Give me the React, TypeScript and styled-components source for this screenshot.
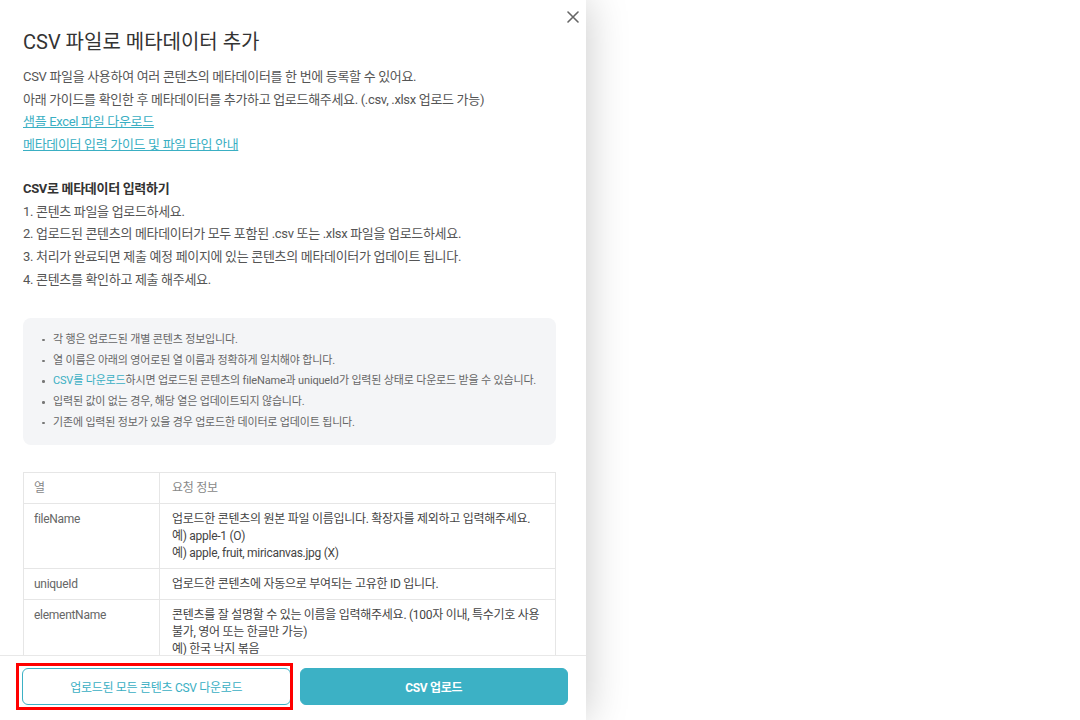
import styled, { createGlobalStyle } from 'styled-components';

const GlobalStyle = createGlobalStyle`
  html, body {
    margin: 0;
    padding: 0;
    background: #ffffff;
  }
  body {
    font-family: Roboto, "Noto Sans CJK KR", sans-serif;
    color: #555;
  }
  * {
    box-sizing: border-box;
  }
`;

const Panel = styled.div`
  position: relative;
  width: 586px;
  height: 720px;
  display: flex;
  flex-direction: column;
  background: #fff;
  box-shadow: 0 0 40px rgba(0, 0, 0, 0.22);
`;

const CloseButton = styled.button`
  position: absolute;
  top: 5px;
  right: 1px;
  width: 24px;
  height: 24px;
  padding: 0;
  border: none;
  background: none;
  display: flex;
  align-items: center;
  justify-content: center;
  cursor: pointer;
`;

const Body = styled.div`
  flex: 1;
  overflow: hidden;
  padding: 28px 30px 0 23px;
`;

const Title = styled.h2`
  margin: 0;
  font-size: 20px;
  line-height: 28px;
  font-weight: 400;
  color: #333;
`;

const Paragraph = styled.div<{ $gap: number }>`
  margin-top: ${(p) => p.$gap}px;
  font-size: 13px;
  line-height: 22.7px;
  letter-spacing: -0.32px;
  color: #555;
`;

const Line = styled.div``;

const Link = styled.a`
  color: #3aafc3;
  text-decoration: underline;
  cursor: pointer;
`;

const SubHeading = styled.div`
  font-weight: 700;
  color: #333;
`;

const NoteBox = styled.ul`
  margin: 27px 0 0;
  padding: 11.5px 16px 11.5px 18px;
  list-style: none;
  background: #f4f5f7;
  border-radius: 8px;
  font-size: 11px;
  line-height: 20.75px;
  letter-spacing: -0.17px;
  color: #666;
`;

const NoteItem = styled.li`
  position: relative;
  padding-left: 12px;
  &::before {
    content: '';
    position: absolute;
    left: 1px;
    top: 9px;
    width: 2.5px;
    height: 2.5px;
    border-radius: 50%;
    background: #777;
  }
`;

const Accent = styled.span`
  color: #3aafc3;
`;

const Table = styled.table`
  margin-top: 27px;
  width: 100%;
  border-collapse: collapse;
  font-size: 12px;
  line-height: 17px;
  letter-spacing: -0.28px;
`;

const Cell = styled.td<{ $head?: boolean; $key?: boolean }>`
  border: 1px solid #e6e6e6;
  padding: 6.5px 12px;
  vertical-align: top;
  text-align: left;
  color: ${(p) => (p.$head ? '#888' : p.$key ? '#666' : '#444')};
  ${(p) => p.$key && 'width: 136px; padding-left: 10px;'}
`;

const Footer = styled.div`
  height: 65px;
  border-top: 1px solid #e8e8e8;
  padding: 12px 18px 0 22px;
  display: grid;
  grid-template-columns: 1fr 1fr;
  align-items: start;
  column-gap: 9px;
`;

const Highlight = styled.div`
  position: relative;
  display: flex;
  &::after {
    content: '';
    position: absolute;
    top: -5px;
    bottom: -5px;
    left: -6px;
    right: -2px;
    border: 3px solid #ff0000;
    pointer-events: none;
  }
`;

const Button = styled.button<{ $primary?: boolean }>`
  width: 100%;
  height: 37px;
  border-radius: 6px;
  font-family: Roboto, "Noto Sans CJK KR", sans-serif;
  font-size: 12px;
  letter-spacing: -0.3px;
  cursor: pointer;
  border: 1px solid #3bb1c5;
  background: ${(p) => (p.$primary ? '#3cb1c5' : '#fff')};
  color: ${(p) => (p.$primary ? '#fff' : '#3aafc3')};
  font-weight: ${(p) => (p.$primary ? 700 : 400)};
`;

const notes = [
  '각 행은 업로드된 개별 콘텐츠 정보입니다.',
  '열 이름은 아래의 영어로된 열 이름과 정확하게 일치해야 합니다.',
  null,
  '입력된 값이 없는 경우, 해당 열은 업데이트되지 않습니다.',
  '기존에 입력된 정보가 있을 경우 업로드한 데이터로 업데이트 됩니다.',
];

export default function App() {
  return (
    <>
      <GlobalStyle />
      <Panel>
        <CloseButton aria-label="닫기">
          <svg width="12" height="12" viewBox="0 0 12 12">
            <path d="M1 1L11 11M11 1L1 11" stroke="#666" strokeWidth="1.6" strokeLinecap="round" />
          </svg>
        </CloseButton>
        <Body>
          <Title>CSV 파일로 메타데이터 추가</Title>
          <Paragraph $gap={10}>
            <Line>CSV 파일을 사용하여 여러 콘텐츠의 메타데이터를 한 번에 등록할 수 있어요.</Line>
            <Line>아래 가이드를 확인한 후 메타데이터를 추가하고 업로드해주세요. (.csv, .xlsx 업로드 가능)</Line>
            <Line>
              <Link>샘플 Excel 파일 다운로드</Link>
            </Line>
            <Line>
              <Link>메타데이터 입력 가이드 및 파일 타입 안내</Link>
            </Line>
          </Paragraph>
          <Paragraph $gap={21}>
            <SubHeading>CSV로 메타데이터 입력하기</SubHeading>
            <Line>1. 콘텐츠 파일을 업로드하세요.</Line>
            <Line>2. 업로드된 콘텐츠의 메타데이터가 모두 포함된 .csv 또는 .xlsx 파일을 업로드하세요.</Line>
            <Line>3. 처리가 완료되면 제출 예정 페이지에 있는 콘텐츠의 메타데이터가 업데이트 됩니다.</Line>
            <Line>4. 콘텐츠를 확인하고 제출 해주세요.</Line>
          </Paragraph>
          <NoteBox>
            {notes.map((n, i) =>
              n ? (
                <NoteItem key={i}>{n}</NoteItem>
              ) : (
                <NoteItem key={i}>
                  <Accent>CSV를 다운로드</Accent>하시면 업로드된 콘텐츠의 fileName과 uniqueId가 입력된 상태로 다운로드 받을 수 있습니다.
                </NoteItem>
              ),
            )}
          </NoteBox>
          <Table>
            <tbody>
              <tr>
                <Cell $head $key>열</Cell>
                <Cell $head>요청 정보</Cell>
              </tr>
              <tr>
                <Cell $key>fileName</Cell>
                <Cell>
                  업로드한 콘텐츠의 원본 파일 이름입니다. 확장자를 제외하고 입력해주세요.
                  <br />
                  예) apple-1 (O)
                  <br />
                  예) apple, fruit, miricanvas.jpg (X)
                </Cell>
              </tr>
              <tr>
                <Cell $key>uniqueId</Cell>
                <Cell>업로드한 콘텐츠에 자동으로 부여되는 고유한 ID 입니다.</Cell>
              </tr>
              <tr>
                <Cell $key>elementName</Cell>
                <Cell>
                  콘텐츠를 잘 설명할 수 있는 이름을 입력해주세요. (100자 이내, 특수기호 사용
                  <br />
                  불가, 영어 또는 한글만 가능)
                  <br />
                  예) 한국 낙지 볶음
                </Cell>
              </tr>
            </tbody>
          </Table>
        </Body>
        <Footer>
          <Highlight>
            <Button>업로드된 모든 콘텐츠 CSV 다운로드</Button>
          </Highlight>
          <Button $primary>CSV 업로드</Button>
        </Footer>
      </Panel>
    </>
  );
}
